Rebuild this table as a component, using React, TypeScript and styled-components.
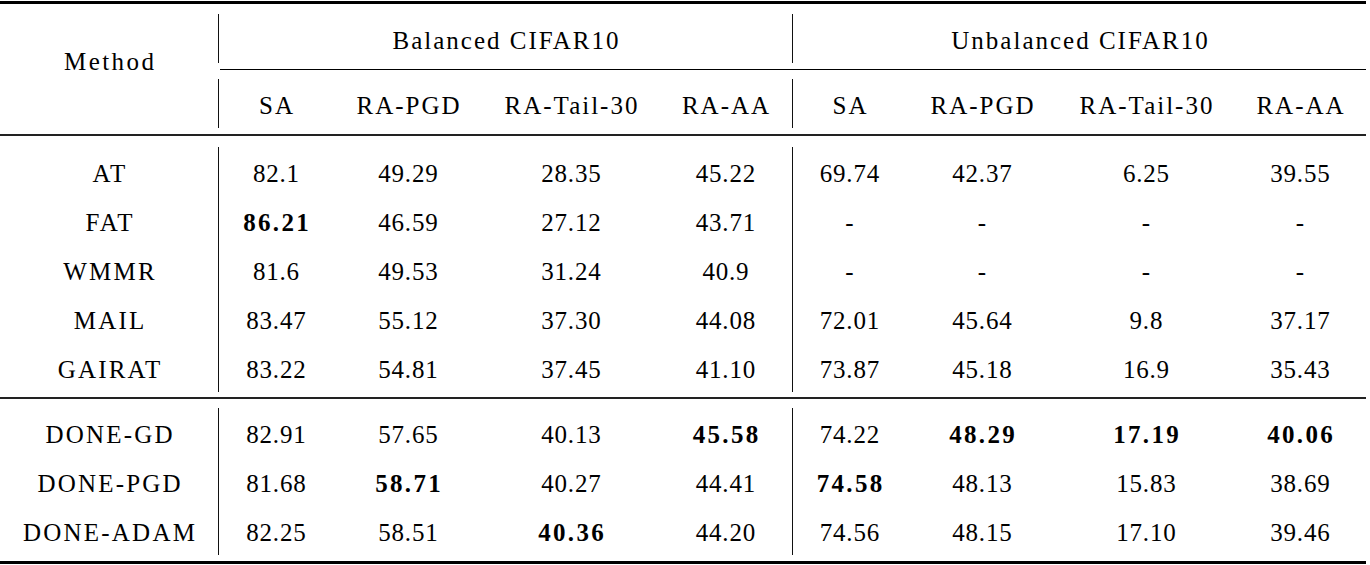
import { createGlobalStyle, styled } from "styled-components";

const GlobalStyle = createGlobalStyle`
  body {
    margin: 0;
    background: #fff;
  }
`;

type Row = {
  method: string;
  balanced: string[];
  unbalanced: string[];
  bold?: string[];
};

const baselines: Row[] = [
  { method: "AT", balanced: ["82.1", "49.29", "28.35", "45.22"], unbalanced: ["69.74", "42.37", "6.25", "39.55"] },
  { method: "FAT", balanced: ["86.21", "46.59", "27.12", "43.71"], unbalanced: ["-", "-", "-", "-"], bold: ["b0"] },
  { method: "WMMR", balanced: ["81.6", "49.53", "31.24", "40.9"], unbalanced: ["-", "-", "-", "-"] },
  { method: "MAIL", balanced: ["83.47", "55.12", "37.30", "44.08"], unbalanced: ["72.01", "45.64", "9.8", "37.17"] },
  { method: "GAIRAT", balanced: ["83.22", "54.81", "37.45", "41.10"], unbalanced: ["73.87", "45.18", "16.9", "35.43"] },
];

const ours: Row[] = [
  { method: "DONE-GD", balanced: ["82.91", "57.65", "40.13", "45.58"], unbalanced: ["74.22", "48.29", "17.19", "40.06"], bold: ["b3", "u1", "u2", "u3"] },
  { method: "DONE-PGD", balanced: ["81.68", "58.71", "40.27", "44.41"], unbalanced: ["74.58", "48.13", "15.83", "38.69"], bold: ["b1", "u0"] },
  { method: "DONE-ADAM", balanced: ["82.25", "58.51", "40.36", "44.20"], unbalanced: ["74.56", "48.15", "17.10", "39.46"], bold: ["b2"] },
];

const subHeads = ["SA", "RA-PGD", "RA-Tail-30", "RA-AA"];

const leftCols = "114px 150px 176px 133px";
const rightCols = "113px 152px 176px 132px";

// letter spacing per kind of text, to reach the wider Computer Modern widths
const LS_TEXT = 2.2;
const LS_NUM = 0.8;
const LS_BOLD = 2.3;

const Page = styled.div`
  width: 1366px;
  padding-top: 1px;
  font-family: "Liberation Serif", "Times New Roman", serif;
  font-size: 25px;
  color: #000;
`;

const Rule = styled.div<{ $h: number; $inset?: number; $color?: string }>`
  height: ${({ $h }) => $h}px;
  margin-left: ${({ $inset }) => $inset ?? 0}px;
  background: ${({ $color }) => $color ?? "#000"};
`;

const Header = styled.div`
  display: flex;
`;

const MethodHead = styled.div`
  width: 218px;
  flex: none;
  padding-top: 35px;
  line-height: 45px;
  text-align: center;
  letter-spacing: 2.4px;
  text-indent: 2.4px;
`;

const HeadRight = styled.div`
  flex: 1;
  display: flex;
  flex-direction: column;
`;

const Band = styled.div<{ $top: number; $bottom: number }>`
  display: flex;
  padding: ${({ $top }) => $top}px 0 ${({ $bottom }) => $bottom}px;
`;

const MethodCol = styled.div`
  width: 218px;
  flex: none;
  display: flex;
  flex-direction: column;
`;

const Group = styled.div<{ $cols: string }>`
  flex: none;
  display: grid;
  grid-template-columns: ${({ $cols }) => $cols};
  grid-auto-rows: 49px;
  border-left: 1px solid #111;
`;

const Cell = styled.div<{ $bold?: boolean; $ls?: number; $span?: boolean }>`
  height: 49px;
  box-sizing: border-box;
  padding-top: 4px;
  line-height: 45px;
  text-align: center;
  white-space: nowrap;
  font-weight: ${({ $bold }) => ($bold ? 700 : 400)};
  letter-spacing: ${({ $ls }) => $ls ?? LS_NUM}px;
  text-indent: ${({ $ls }) => $ls ?? LS_NUM}px;
  grid-column: ${({ $span }) => ($span ? "1 / -1" : "auto")};
`;

const Body = ({ rows, top, bottom }: { rows: Row[]; top: number; bottom: number }) => (
  <Band $top={top} $bottom={bottom}>
    <MethodCol>
      {rows.map((r) => (
        <Cell key={r.method} $ls={LS_TEXT}>
          {r.method}
        </Cell>
      ))}
    </MethodCol>
    <Group $cols={leftCols}>
      {rows.map((r) =>
        r.balanced.map((v, i) => {
          const bold = r.bold?.includes(`b${i}`);
          return (
            <Cell key={r.method + "b" + i} $bold={bold} $ls={bold ? LS_BOLD : LS_NUM}>
              {v}
            </Cell>
          );
        })
      )}
    </Group>
    <Group $cols={rightCols}>
      {rows.map((r) =>
        r.unbalanced.map((v, i) => {
          const bold = r.bold?.includes(`u${i}`);
          return (
            <Cell key={r.method + "u" + i} $bold={bold} $ls={bold ? LS_BOLD : LS_NUM}>
              {v}
            </Cell>
          );
        })
      )}
    </Group>
  </Band>
);

export default function App() {
  return (
    <>
      <GlobalStyle />
      <Page>
        <Rule $h={3} />
        <Header>
          <MethodHead>Method</MethodHead>
          <HeadRight>
            <Band $top={10} $bottom={6}>
              <Group $cols={leftCols}>
                <Cell $span $ls={2}>Balanced CIFAR10</Cell>
              </Group>
              <Group $cols={rightCols}>
                <Cell $span $ls={2}>Unbalanced CIFAR10</Cell>
              </Group>
            </Band>
            <Rule $h={1} $inset={2} />
            <Band $top={9} $bottom={6}>
              <Group $cols={leftCols}>
                {subHeads.map((h) => (
                  <Cell key={"l" + h} $ls={2}>
                    {h}
                  </Cell>
                ))}
              </Group>
              <Group $cols={rightCols}>
                {subHeads.map((h) => (
                  <Cell key={"r" + h} $ls={2}>
                    {h}
                  </Cell>
                ))}
              </Group>
            </Band>
          </HeadRight>
        </Header>
        <Rule $h={2} $color="#222" />
        <Body rows={baselines} top={11} bottom={5} />
        <Rule $h={2} $color="#222" />
        <Body rows={ours} top={9} bottom={6} />
        <Rule $h={3} />
      </Page>
    </>
  );
}
